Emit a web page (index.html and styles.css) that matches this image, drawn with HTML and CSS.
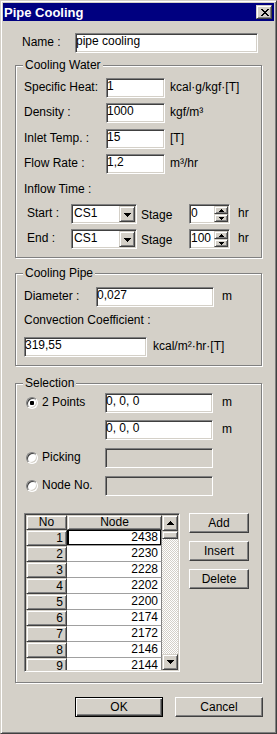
FILE: index.html
```html
<!DOCTYPE html>
<html lang="en">
<head>
    <meta charset="UTF-8">
    <meta name="viewport" content="width=device-width, initial-scale=1.0">
    <title>Pipe Cooling</title>
    <link rel="stylesheet" href="styles.css">
</head>
<body>
    <div class="window">
        <div class="titlebar">
            <span class="title">Pipe Cooling</span>
            <button class="close-button" aria-label="Close">
                <svg width="8" height="7" viewBox="0 0 8 7" shape-rendering="crispEdges"><path d="M0 0h2v1H0zM6 0h2v1H6zM1 1h2v1H1zM5 1h2v1H5zM2 2h4v1H2zM3 3h2v1H3zM2 4h4v1H2zM1 5h2v1H1zM5 5h2v1H5zM0 6h2v1H0zM6 6h2v1H6z"/></svg>
            </button>
        </div>

        <div class="content">
            <div class="row name-row">
                <span class="label name-label">Name :</span>
                <input class="field name-field" type="text" value="pipe cooling">
            </div>

            <!-- Cooling Water -->
            <div class="group water-group">
                <span class="legend">Cooling Water</span>
                <div class="row">
                    <span class="label water-label">Specific Heat:</span>
                    <input class="field water-field" type="text" value="1">
                    <span class="unit">kcal·g/kgf·[T]</span>
                </div>
                <div class="row mt5">
                    <span class="label water-label">Density :</span>
                    <input class="field water-field" type="text" value="1000">
                    <span class="unit">kgf/m³</span>
                </div>
                <div class="row mt6">
                    <span class="label water-label">Inlet Temp. :</span>
                    <input class="field water-field" type="text" value="15">
                    <span class="unit">[T]</span>
                </div>
                <div class="row mt5">
                    <span class="label water-label">Flow Rate :</span>
                    <input class="field water-field" type="text" value="1,2">
                    <span class="unit">m³/hr</span>
                </div>
                <div class="row mt6">
                    <span class="label">Inflow Time :</span>
                </div>
                <div class="row mt4">
                    <span class="label time-label">Start :</span>
                    <div class="combo">
                        <span class="combo-text">CS1</span>
                        <span class="combo-button">
                            <svg width="7" height="4" viewBox="0 0 7 4" shape-rendering="crispEdges"><path d="M0 0h7v1H0zM1 1h5v1H1zM2 2h3v1H2zM3 3h1v1H3z"/></svg>
                        </span>
                    </div>
                    <span class="label stage-label">Stage</span>
                    <div class="spin">
                        <input class="spin-field" type="text" value="0">
                        <div class="spin-buttons">
                            <span class="spin-button"><svg width="5" height="3" viewBox="0 0 5 3" shape-rendering="crispEdges"><path d="M2 0h1v1H2zM1 1h3v1H1zM0 2h5v1H0z"/></svg></span>
                            <span class="spin-button"><svg width="5" height="3" viewBox="0 0 5 3" shape-rendering="crispEdges"><path d="M0 0h5v1H0zM1 1h3v1H1zM2 2h1v1H2z"/></svg></span>
                        </div>
                    </div>
                    <span class="unit hr-unit">hr</span>
                </div>
                <div class="row mt5">
                    <span class="label time-label">End :</span>
                    <div class="combo">
                        <span class="combo-text">CS1</span>
                        <span class="combo-button">
                            <svg width="7" height="4" viewBox="0 0 7 4" shape-rendering="crispEdges"><path d="M0 0h7v1H0zM1 1h5v1H1zM2 2h3v1H2zM3 3h1v1H3z"/></svg>
                        </span>
                    </div>
                    <span class="label stage-label">Stage</span>
                    <div class="spin">
                        <input class="spin-field" type="text" value="100">
                        <div class="spin-buttons">
                            <span class="spin-button"><svg width="5" height="3" viewBox="0 0 5 3" shape-rendering="crispEdges"><path d="M2 0h1v1H2zM1 1h3v1H1zM0 2h5v1H0z"/></svg></span>
                            <span class="spin-button"><svg width="5" height="3" viewBox="0 0 5 3" shape-rendering="crispEdges"><path d="M0 0h5v1H0zM1 1h3v1H1zM2 2h1v1H2z"/></svg></span>
                        </div>
                    </div>
                    <span class="unit hr-unit">hr</span>
                </div>
            </div>

            <!-- Cooling Pipe -->
            <div class="group pipe-group">
                <span class="legend">Cooling Pipe</span>
                <div class="row">
                    <span class="label pipe-label">Diameter :</span>
                    <input class="field diameter-field" type="text" value="0,027">
                    <span class="unit m-unit">m</span>
                </div>
                <div class="row mt4">
                    <span class="label">Convection Coefficient :</span>
                </div>
                <div class="row mt6">
                    <input class="field coef-field" type="text" value="319,55">
                    <span class="unit coef-unit">kcal/m²·hr·[T]</span>
                </div>
            </div>

            <!-- Selection -->
            <div class="group select-group">
                <span class="legend">Selection</span>
                <div class="row">
                    <label class="option"><span class="radio checked"></span><span class="option-text">2 Points</span></label>
                    <input class="field point-field" type="text" value="0, 0, 0">
                    <span class="unit point-unit">m</span>
                </div>
                <div class="row mt7">
                    <input class="field point-field indent" type="text" value="0, 0, 0">
                    <span class="unit point-unit">m</span>
                </div>
                <div class="row mt8">
                    <label class="option"><span class="radio"></span><span class="option-text">Picking</span></label>
                    <input class="field point-field disabled" type="text" value="" disabled>
                </div>
                <div class="row mt8">
                    <label class="option"><span class="radio"></span><span class="option-text">Node No.</span></label>
                    <input class="field point-field disabled" type="text" value="" disabled>
                </div>

                <div class="list-area">
                    <div class="list-box">
                        <div class="list-grid">
                            <div class="head">No</div>
                            <div class="head">Node</div>
                            <div class="no-cell">1</div><div class="node-cell current">2438</div>
                            <div class="no-cell">2</div><div class="node-cell">2230</div>
                            <div class="no-cell">3</div><div class="node-cell">2228</div>
                            <div class="no-cell">4</div><div class="node-cell">2202</div>
                            <div class="no-cell">5</div><div class="node-cell">2200</div>
                            <div class="no-cell">6</div><div class="node-cell">2174</div>
                            <div class="no-cell">7</div><div class="node-cell">2172</div>
                            <div class="no-cell">8</div><div class="node-cell">2146</div>
                            <div class="no-cell">9</div><div class="node-cell">2144</div>
                        </div>
                        <div class="scrollbar">
                            <span class="scroll-button"><svg width="7" height="4" viewBox="0 0 7 4" shape-rendering="crispEdges"><path d="M3 0h1v1H3zM2 1h3v1H2zM1 2h5v1H1zM0 3h7v1H0z"/></svg></span>
                            <span class="scroll-thumb"></span>
                            <span class="scroll-track"></span>
                            <span class="scroll-button"><svg width="7" height="4" viewBox="0 0 7 4" shape-rendering="crispEdges"><path d="M0 0h7v1H0zM1 1h5v1H1zM2 2h3v1H2zM3 3h1v1H3z"/></svg></span>
                        </div>
                    </div>
                    <div class="list-buttons">
                        <button class="push-button">Add</button>
                        <button class="push-button">Insert</button>
                        <button class="push-button">Delete</button>
                    </div>
                </div>
            </div>

            <div class="footer">
                <button class="push-button dialog-button default">OK</button>
                <button class="push-button dialog-button">Cancel</button>
            </div>
        </div>
    </div>
</body>
</html>
```

FILE: styles.css
```css
* {
    margin: 0;
    padding: 0;
    box-sizing: border-box;
}

body {
    background: #d4d0c8;
    font-family: "Liberation Sans", Arial, sans-serif;
    font-size: 12px;
    color: #000;
}

input, button {
    font-family: inherit;
    font-size: 12px;
    color: #000;
    outline: none;
}

.window {
    width: 277px;
    height: 734px;
    padding: 2px;
    background: #d4d0c8;
    border: 1px solid;
    border-color: #d4d0c8 #404040 #404040 #d4d0c8;
    box-shadow: inset 1px 1px #fff, inset -1px -1px #808080;
}

/* title bar */
.titlebar {
    height: 18px;
    display: flex;
    align-items: center;
    justify-content: space-between;
    padding: 0 2px 0 1px;
    background: #000080;
}

.title {
    color: #fff;
    font-weight: bold;
    font-size: 13px;
}

.close-button {
    width: 16px;
    height: 14px;
    display: flex;
    align-items: center;
    justify-content: center;
    padding-left: 1px;
    background: #d4d0c8;
    border: 1px solid;
    border-color: #d4d0c8 #404040 #404040 #d4d0c8;
    box-shadow: inset 1px 1px #fff, inset -1px -1px #808080;
}

/* layout */
.content {
    padding: 12px 0 0 12px;
}

.row {
    display: flex;
    align-items: center;
    height: 20px;
}

.mt4 { margin-top: 4px; }
.mt5 { margin-top: 5px; }
.mt6 { margin-top: 6px; }
.mt7 { margin-top: 7px; }
.mt8 { margin-top: 8px; }

.label {
    white-space: nowrap;
    padding-bottom: 2px;
}

.unit {
    white-space: nowrap;
    margin-left: 5px;
    padding-bottom: 2px;
}

.name-label {
    width: 53px;
    margin-left: 7px;
}

/* sunken edit box */
.field {
    height: 20px;
    padding: 0 0 4px 0;
    background: #fff;
    border: 1px solid;
    border-color: #808080 #fff #fff #808080;
    box-shadow: inset 1px 1px #404040, inset -1px -1px #d4d0c8;
}

.field.disabled {
    background: #d4d0c8;
}

.name-field { width: 183px; }

/* group boxes */
.group {
    position: relative;
    width: 247px;
    border: 1px solid #808080;
    box-shadow: inset 1px 1px #fff, 1px 1px #fff;
    padding-left: 8px;
}

.legend {
    position: absolute;
    top: -8px;
    left: 7px;
    padding: 0 2px;
    line-height: 14px;
    background: #d4d0c8;
}

.water-group {
    margin-top: 12px;
    padding-top: 12px;
    padding-bottom: 8px;
}

.water-label { width: 82px; }
.water-field { width: 59px; }

.time-label {
    width: 47px;
    padding-left: 3px;
}

.combo {
    width: 66px;
    height: 20px;
    display: flex;
    padding: 1px;
    background: #fff;
    border: 1px solid;
    border-color: #808080 #fff #fff #808080;
    box-shadow: inset 1px 1px #404040, inset -1px -1px #d4d0c8;
}

.combo-text {
    flex: 1;
    padding-left: 1px;
    line-height: 15px;
}

.combo-button {
    width: 16px;
    height: 16px;
    display: flex;
    align-items: center;
    justify-content: center;
    padding-top: 1px;
    background: #d4d0c8;
    border: 1px solid;
    border-color: #d4d0c8 #404040 #404040 #d4d0c8;
    box-shadow: inset 1px 1px #fff, inset -1px -1px #808080;
}

.stage-label {
    width: 48px;
    margin-left: 4px;
    padding-top: 4px;
}

.spin {
    width: 41px;
    height: 20px;
    display: flex;
    padding: 1px;
    background: #fff;
    border: 1px solid;
    border-color: #808080 #fff #fff #808080;
    box-shadow: inset 1px 1px #404040, inset -1px -1px #d4d0c8;
}

.spin-field {
    width: 23px;
    height: 16px;
    border: none;
    background: transparent;
    padding: 0 0 3px 0;
}

.spin-buttons {
    width: 14px;
    display: flex;
    flex-direction: column;
}

.spin-button {
    height: 8px;
    display: flex;
    align-items: center;
    justify-content: center;
    background: #d4d0c8;
    border: 1px solid;
    border-color: #d4d0c8 #404040 #404040 #d4d0c8;
    box-shadow: inset 1px 1px #fff, inset -1px -1px #808080;
}

.hr-unit { margin-left: 8px; }

/* cooling pipe */
.pipe-group {
    margin-top: 15px;
    padding-top: 13px;
    padding-bottom: 8px;
}

.pipe-label { width: 72px; }
.diameter-field { width: 118px; }
.m-unit { margin-left: 8px; }
.coef-field { width: 123px; }
.coef-unit { margin-left: 6px; }

/* selection */
.select-group {
    margin-top: 17px;
    padding-top: 9px;
    padding-bottom: 10px;
}

.option {
    width: 81px;
    display: flex;
    align-items: center;
}

.radio {
    width: 12px;
    height: 12px;
    margin-left: 2px;
    border-radius: 50%;
    background: #fff;
    border: 1px solid;
    border-color: #808080 #fff #fff #808080;
    box-shadow: inset 1px 1px #404040, inset -1px -1px #d4d0c8;
}

.radio.checked {
    background: radial-gradient(circle, #000 0 2px, #fff 2.5px);
}

.option-text {
    margin-left: 4px;
    padding-bottom: 2px;
}

.point-field { width: 108px; }
.point-field.indent { margin-left: 81px; }
.point-unit { margin-left: 9px; }

.list-area {
    display: flex;
    gap: 9px;
    margin-top: 17px;
}

.list-box {
    width: 156px;
    height: 159px;
    display: flex;
    padding: 1px;
    background: #fff;
    border: 1px solid;
    border-color: #808080 #fff #fff #808080;
    box-shadow: inset 1px 1px #404040, inset -1px -1px #d4d0c8;
}

.list-grid {
    width: 136px;
    height: 155px;
    display: grid;
    grid-template-columns: 41px 95px;
    grid-template-rows: 15px;
    grid-auto-rows: 16px;
    overflow: hidden;
    background: #fff;
}

.head,
.no-cell {
    background: #d4d0c8;
    border: 1px solid;
    border-color: #d4d0c8 #404040 #404040 #d4d0c8;
    box-shadow: inset 1px 1px #fff, inset -1px -1px #808080;
    line-height: 13px;
}

.head {
    text-align: center;
}

.no-cell {
    text-align: right;
    padding-right: 3px;
    line-height: 14px;
}

.node-cell {
    text-align: right;
    padding-right: 3px;
    line-height: 15px;
    border-bottom: 1px solid #a0a0a0;
    border-right: 1px solid #808080;
}

.node-cell.current {
    box-shadow: inset 2px 0 #000, inset 0 0 0 1px #000;
}

.scrollbar {
    width: 16px;
    display: flex;
    flex-direction: column;
}

.scroll-button,
.scroll-thumb {
    display: flex;
    align-items: center;
    justify-content: center;
    background: #d4d0c8;
    border: 1px solid;
    border-color: #d4d0c8 #404040 #404040 #d4d0c8;
    box-shadow: inset 1px 1px #fff, inset -1px -1px #808080;
}

.scroll-button { height: 16px; }
.scroll-thumb { height: 8px; }

.scroll-track {
    flex: 1;
    background: repeating-conic-gradient(#d4d0c8 0 25%, #fff 0 50%) 0 0 / 2px 2px;
}

.list-buttons {
    display: flex;
    flex-direction: column;
    gap: 8px;
}

.push-button {
    width: 60px;
    height: 20px;
    padding-bottom: 1px;
    background: #d4d0c8;
    border: 1px solid;
    border-color: #fff #404040 #404040 #fff;
    box-shadow: inset -1px -1px #808080;
}

/* OK / Cancel */
.footer {
    display: flex;
    gap: 12px;
    margin-top: 14px;
    padding-left: 60px;
}

.dialog-button {
    width: 88px;
}

.dialog-button.default {
    border: 1px solid #000;
    box-shadow: inset 1px 1px #fff, inset -1px -1px #404040, inset -2px -2px #808080;
}
```
